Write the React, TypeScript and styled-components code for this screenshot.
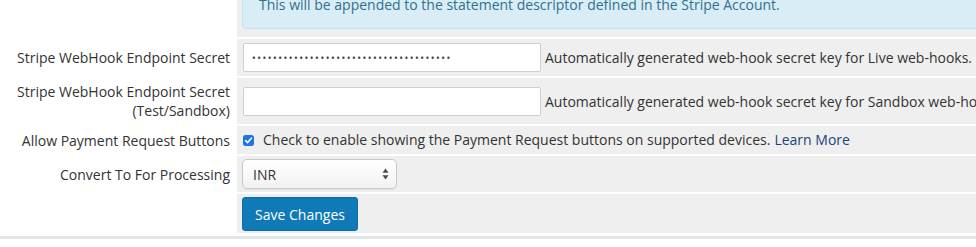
import styled, { createGlobalStyle } from "styled-components";

const GlobalStyle = createGlobalStyle`
    html, body {
        margin: 0;
        padding: 0;
        background: #ffffff;
        overflow: hidden;
    }
    body {
        font-family: "Open Sans", "Liberation Sans", sans-serif;
        font-size: 14px;
        color: #333333;
    }
`

const Page = styled.div`
    width: 1240px;
    margin-top: -26px;
`

const FormTable = styled.div`
    display: grid;
    grid-template-columns: 237px 1fr;
    row-gap: 2px;
`

const Label = styled.div<{ $pad?: string }>`
    display: flex;
    align-items: center;
    justify-content: flex-end;
    text-align: right;
    padding: ${p => p.$pad ?? "0"};
    padding-right: 7px;
    line-height: 19px;
    background: #ffffff;
`

const Field = styled.div<{ $pad: string }>`
    display: flex;
    align-items: center;
    padding: ${p => p.$pad};
    background: #efefef;
    white-space: nowrap;
    line-height: 19px;
`

const Alert = styled.div`
    flex: 1;
    padding: 16px 16px 14px;
    line-height: 18px;
    background: #d9edf7;
    border: 1px solid #bce8f1;
    border-radius: 4px;
    color: #31708f;
`

const TextInput = styled.input`
    box-sizing: border-box;
    width: 298px;
    height: 29px;
    margin: 0 4px 0 1px;
    padding: 0 8px;
    border: 1px solid #cfcfcf;
    border-radius: 2px;
    background: #ffffff;
    font-family: "Open Sans", "Liberation Sans", sans-serif;
    font-size: 10px;
    letter-spacing: 1.5px;
    color: #3a3a3a;
    outline: none;
`

const Hint = styled.span`
    color: #333333;
`

const CheckBox = styled.span`
    display: inline-flex;
    align-items: center;
    justify-content: center;
    box-sizing: border-box;
    width: 11px;
    height: 11px;
    margin: 1px 9px 0 1px;
    border-radius: 2.5px;
    background: #1f74e6;
`

const LearnMore = styled.a`
    color: #22427c;
    text-decoration: none;
    margin-left: 4px;
`

const Select = styled.div`
    box-sizing: border-box;
    display: flex;
    align-items: center;
    justify-content: space-between;
    width: 155px;
    height: 30px;
    padding: 0 7px 0 10px;
    border: 1px solid #c9c9c9;
    border-radius: 5px;
    background: linear-gradient(#ffffff, #f2f2f2);
    box-shadow: 0 1px 1px rgba(0, 0, 0, 0.06);
    color: #333333;
`

const Button = styled.button`
    box-sizing: border-box;
    height: 34px;
    width: 116px;
    padding: 0;
    border: 1px solid #0b6ea6;
    border-radius: 3px;
    background: #0f7ab7;
    color: #ffffff;
    font-family: "Open Sans", "Liberation Sans", sans-serif;
    font-size: 14px;
    cursor: pointer;
`

const BottomBar = styled.div`
    margin-top: 3px;
    height: 3px;
    background: #e1e5e8;
`

const Check = () => (
    <svg width="9" height="9" viewBox="0 0 9 9">
        <path d="M1.6 4.7 L3.6 6.6 L7.4 2.2" fill="none" stroke="#ffffff" strokeWidth="1.6" strokeLinecap="round" strokeLinejoin="round"/>
    </svg>
)

const Arrows = () => (
    <svg width="7" height="12" viewBox="0 0 7 12">
        <path d="M3.5 0.5 L6.5 4.8 L0.5 4.8 Z" fill="#4a4a4a"/>
        <path d="M3.5 11.5 L6.5 7.2 L0.5 7.2 Z" fill="#4a4a4a"/>
    </svg>
)

export default function App() {
    return (
        <>
            <GlobalStyle/>
            <Page>
                <FormTable>
                    <Label/>
                    <Field $pad="5px 0 8px 5px">
                        <Alert>This will be appended to the statement descriptor defined in the Stripe Account.</Alert>
                    </Field>

                    <Label>Stripe WebHook Endpoint Secret</Label>
                    <Field $pad="4px 5px">
                        <TextInput type="password" defaultValue="whsec_0123456789abcdefghijklmnopqrstuv"/>
                        <Hint>Automatically generated web-hook secret key for Live web-hooks.</Hint>
                    </Field>

                    <Label $pad="4px 0">Stripe WebHook Endpoint Secret<br/>(Test/Sandbox)</Label>
                    <Field $pad="4px 5px">
                        <TextInput type="password" defaultValue=""/>
                        <Hint>Automatically generated web-hook secret key for Sandbox web-hooks.</Hint>
                    </Field>

                    <Label>Allow Payment Request Buttons</Label>
                    <Field $pad="4px 5px 5px">
                        <CheckBox><Check/></CheckBox>
                        <Hint>Check to enable showing the Payment Request buttons on supported devices.</Hint>
                        <LearnMore href="#">Learn More</LearnMore>
                    </Field>

                    <Label>Convert To For Processing</Label>
                    <Field $pad="3px 5px">
                        <Select>
                            <span>INR</span>
                            <Arrows/>
                        </Select>
                    </Field>

                    <Label/>
                    <Field $pad="3px 5px 2px">
                        <Button>Save Changes</Button>
                    </Field>
                </FormTable>
                <BottomBar/>
            </Page>
        </>
    );
}
